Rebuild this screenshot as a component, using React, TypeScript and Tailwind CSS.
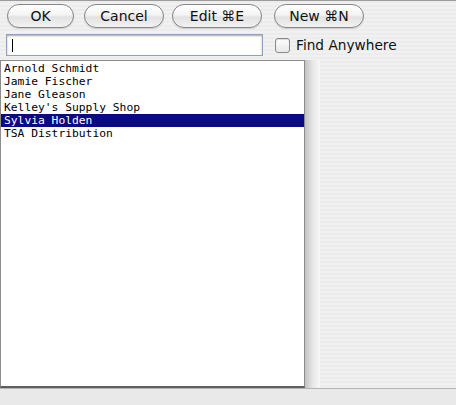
import React from "react";

const btn =
  "h-[24px] rounded-full border border-[#868686] bg-[linear-gradient(to_bottom,#ffffff_0%,#f4f4f4_45%,#e2e2e2_55%,#f2f2f2_100%)] shadow-[0_1px_1px_rgba(0,0,0,0.15)] text-[14px] leading-none text-[#111] flex items-center justify-center";

const names = [
  "Arnold Schmidt",
  "Jamie Fischer",
  "Jane Gleason",
  "Kelley's Supply Shop",
  "Sylvia Holden",
  "TSA Distribution",
];

export default function App() {
  return (
    <div
      className="w-[456px] h-[405px] flex flex-col overflow-hidden border-t border-[#9c9c9c] bg-[repeating-linear-gradient(to_bottom,#ececec_0px,#ececec_2px,#f1f1f1_2px,#f1f1f1_4px)]"
      style={{ fontFamily: '"DejaVu Sans", "Liberation Sans", sans-serif' }}
    >
      <div className="flex items-center pt-[3px] pl-[7px] h-[27px]">
        <div className={`${btn} w-[67px]`}>OK</div>
        <div className={`${btn} w-[80px] ml-[10px]`}>Cancel</div>
        <div className={`${btn} w-[90px] ml-[8px]`}>Edit ⌘E</div>
        <div className={`${btn} w-[90px] ml-[12px]`}>New ⌘N</div>
      </div>
      <div className="flex items-center mt-[6px] h-[22px]">
        <div className="ml-[6px] w-[257px] h-[22px] bg-white border border-[#8ea2c0] shadow-[inset_0_1px_2px_rgba(0,0,0,0.35)] flex items-center pl-[5px]">
          <div className="w-[1px] h-[13px] bg-black" />
        </div>
        <div className="ml-[12px] w-[15px] h-[15px] rounded-[3px] border border-[#8a8a8a] bg-[linear-gradient(to_bottom,#ffffff,#e8e8e8)] shadow-[inset_0_1px_1px_rgba(0,0,0,0.15)]" />
        <span className="ml-[6px] text-[13.7px] text-[#111]">Find Anywhere</span>
      </div>
      <div className="flex mt-[4px] h-[328px]">
        <div
          className="w-[305px] h-full bg-white border-l border-t border-r border-[#8c8c8c] border-b-2 border-b-[#5f5f5f] pt-[1px]"
          style={{ fontFamily: '"DejaVu Sans Mono", "Liberation Mono", monospace' }}
        >
          {names.map((n) => (
            <div
              key={n}
              className={`h-[13px] leading-[13px] pl-[3px] text-[11.3px] whitespace-pre ${
                n === "Sylvia Holden" ? "bg-[#0a0a82] text-white" : "text-black"
              }`}
            >
              {n}
            </div>
          ))}
        </div>
        <div className="w-[15px] h-full bg-[linear-gradient(to_right,#c2c2c2,#e6e6e6_50%,#f8f8f8)]" />
      </div>
      <div className="flex-1 border-t border-[#b4b4b4] bg-[#e9e9e9]" />
    </div>
  );
}
